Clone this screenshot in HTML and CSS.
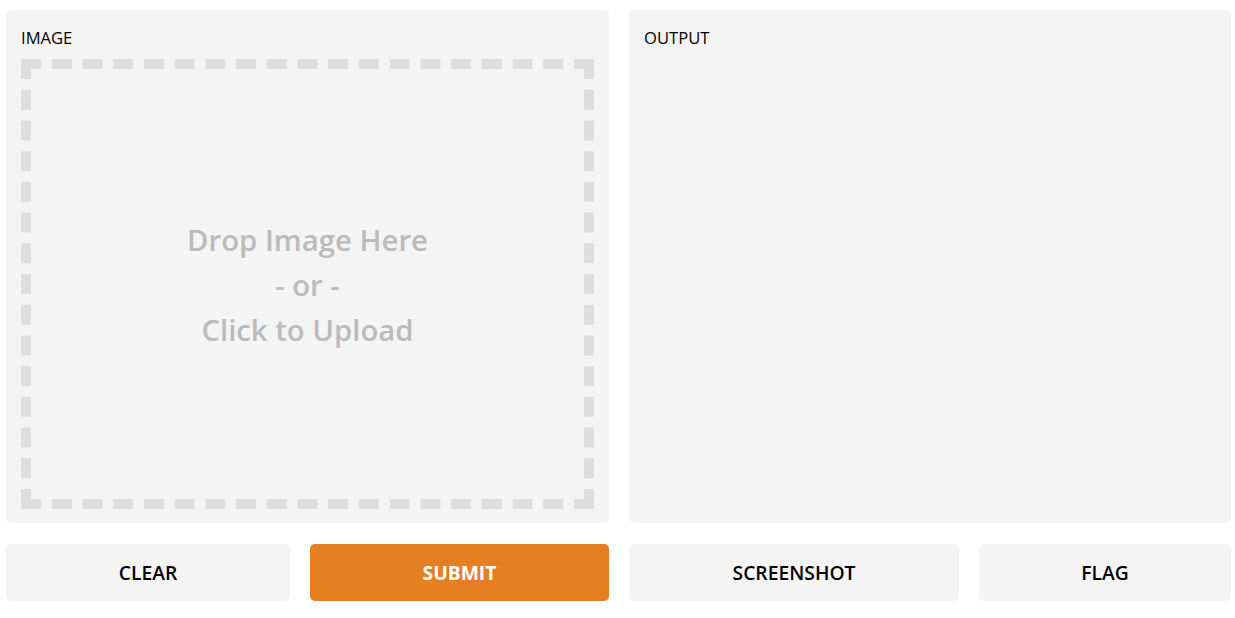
FILE: index.html
```html
<!DOCTYPE html>
<html>
<head>
<meta charset="utf-8">
<link rel="stylesheet" href="styles.css">
</head>
<body>
<div class="page">
  <div class="panels">
    <div class="panel">
      <div class="label">IMAGE</div>
      <div class="dropzone">
        <div class="drop-text">Drop Image Here<br>- or -<br>Click to Upload</div>
      </div>
    </div>
    <div class="panel">
      <div class="label">OUTPUT</div>
    </div>
  </div>
  <div class="buttons">
    <div class="btn-group left">
      <button class="btn clear">CLEAR</button>
      <button class="btn submit">SUBMIT</button>
    </div>
    <div class="btn-group right">
      <button class="btn screenshot">SCREENSHOT</button>
      <button class="btn flag">FLAG</button>
    </div>
  </div>
</div>
</body>
</html>
```
FILE: styles.css
```css
html, body {
  margin: 0;
  padding: 0;
  background: #ffffff;
  font-family: "Open Sans", "Liberation Sans", sans-serif;
}
.page {
  padding: 10px 4px 0 6px;
}
.panels {
  display: grid;
  grid-template-columns: 603px 602px;
  column-gap: 20px;
}
.panel {
  background: #f4f4f4;
  border-radius: 5px;
  height: 513px;
  box-sizing: border-box;
  padding: 17px 15px 14px 15px;
  display: flex;
  flex-direction: column;
}
.label {
  font-size: 16.6px;
  line-height: 22px;
  color: #000;
  margin-bottom: 10px;
}
.dropzone {
  flex: 1;
  border: 10px dashed #dddddd;
  display: flex;
  align-items: center;
  justify-content: center;
}
.drop-text {
  font-size: 29.3px;
  font-weight: 600;
  line-height: 45px;
  color: #bbbbbb;
  text-align: center;
  padding-top: 2px;
}
.buttons {
  margin-top: 21px;
  display: grid;
  grid-template-columns: 603px 602px;
  column-gap: 20px;
}
.btn-group {
  display: grid;
  column-gap: 20px;
}
.btn-group.left {
  grid-template-columns: 284px 299px;
}
.btn-group.right {
  grid-template-columns: 330px 252px;
}
.btn {
  height: 57px;
  border: none;
  border-radius: 5px;
  background: #f4f4f4;
  font-family: "Open Sans", "Liberation Sans", sans-serif;
  font-size: 19.3px;
  font-weight: 600;
  color: #000;
  padding: 0;
}
.btn.submit {
  background: #e67e22;
  color: #ffffff;
  font-weight: 700;
}
```
